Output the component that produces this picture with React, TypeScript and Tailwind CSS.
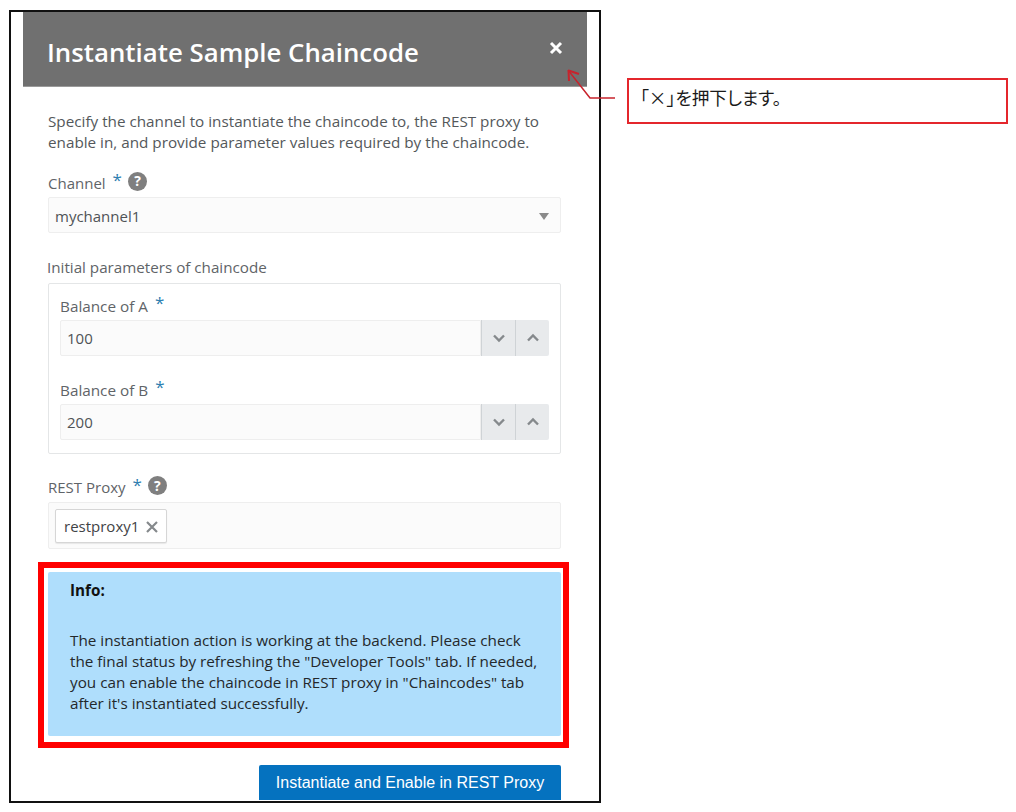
import React from 'react';

const Req = ({ className = '' }: { className?: string }) => (
  <span className={`text-[17px] leading-none text-[#2e7eb0] ${className}`}>*</span>
);

const Help = () => (
  <span className="flex h-[19px] w-[19px] items-center justify-center rounded-full bg-[#7f7f7f] text-[14px] font-bold leading-none text-white">?</span>
);

const Chevron = ({ up = false }: { up?: boolean }) => (
  <svg width="14" height="10" viewBox="0 0 14 10" fill="none" stroke="#85898c" strokeWidth="2.4">
    <path d={up ? 'M2 7.5 7 2.5l5 5' : 'M2 2.5 7 7.5l5-5'} />
  </svg>
);

const NumberField = ({ label, value }: { label: string; value: string }) => (
  <div>
    <div className="flex h-[26px] items-center pb-[2px] text-[15.3px] text-[#5f6468]">
      <span>{label}</span>
      <Req className="ml-[7px] mt-[-7px]" />
    </div>
    <div className="flex h-[36px]">
      <div className="flex flex-1 items-center rounded-l-[2px] border border-[#eeeeee] bg-[#fbfbfb] pl-[6px] pt-[1px] text-[15px] text-[#4f5356]">{value}</div>
      <div className="flex w-[34px] items-center justify-center border-l border-[#cfd3d6] bg-[#e8eaec]"><Chevron /></div>
      <div className="flex w-[34px] items-center justify-center rounded-r-[2px] border-l border-[#cfd3d6] bg-[#e8eaec]"><Chevron up /></div>
    </div>
  </div>
);

export default function App() {
  return (
    <div className="relative flex h-[812px] w-[1016px] items-start bg-white pl-[9px] pt-[10px] font-['Open_Sans',sans-serif]">
      {/* captured dialog */}
      <div className="h-[793px] w-[592px] shrink-0 overflow-hidden border-2 border-[#111111] pl-[12px]">
        <div className="w-[564px]">
          <div className="flex h-[75px] items-start justify-between border-b border-[#9a9a9a] bg-[#707070] pl-[24px] pr-[24px]">
            <h1 className="mt-[20px] text-[25.8px] font-semibold leading-[40px] text-white">Instantiate Sample Chaincode</h1>
            <svg className="mt-[29px]" width="14" height="14" viewBox="0 0 14 14" stroke="#ffffff" strokeWidth="3">
              <path d="M2 2l10 10M12 2 2 12" />
            </svg>
          </div>

          <div className="pl-[25px] pr-[26px]">
            <p className="mt-[24px] text-[15.25px] leading-[21px] text-[#54585b]">
              Specify the channel to instantiate the chaincode to, the REST proxy to enable in, and provide parameter values required by the chaincode.
            </p>

            <div className="mt-[18px] flex h-[26px] items-center pb-[2px] text-[15px] text-[#5f6468]">
              <span>Channel</span>
              <Req className="ml-[7px] mt-[-7px]" />
              <span className="ml-[6px] mt-[-4px]"><Help /></span>
            </div>
            <div className="flex h-[36px] items-center justify-between rounded-[2px] border border-[#eeeeee] bg-[#fbfbfb] pl-[6px] pr-[11px] pt-[2px] text-[15px] text-[#4f5356]">
              <span>mychannel1</span>
              <span className="h-0 w-0 border-x-[5px] border-t-[7px] border-x-transparent border-t-[#8a8a8a]" />
            </div>

            <div className="-ml-px mt-[24px] h-[26px] text-[15.2px] leading-[20px] text-[#5f6468]">Initial parameters of chaincode</div>
            <div className="h-[171px] rounded-[2px] border border-[#e4e6e7] px-[11px] pt-[10px]">
              <NumberField label="Balance of A" value="100" />
              <div className="h-[22px]" />
              <NumberField label="Balance of B" value="200" />
            </div>

            <div className="mt-[22px] flex h-[26px] items-center pb-[3px] text-[15px] text-[#5f6468]">
              <span>REST Proxy</span>
              <Req className="ml-[7px] mt-[-7px]" />
              <span className="ml-[6px] mt-[-4px]"><Help /></span>
            </div>
            <div className="flex h-[47px] items-center rounded-[2px] border border-[#eeeeee] bg-[#fbfbfb] pl-[6px]">
              <div className="flex h-[34px] w-[112px] items-center rounded-[2px] border border-[#d6d6d6] bg-white pl-[8px] pt-[2px] text-[15px] text-[#3f4346] shadow-[0_1px_1px_rgba(0,0,0,0.08)]">
                <span>restproxy1</span>
                <svg className="ml-[7px]" width="12" height="12" viewBox="0 0 12 12" stroke="#85898c" strokeWidth="2.2">
                  <path d="M1 1l10 10M11 1 1 11" />
                </svg>
              </div>
            </div>

            {/* highlight around the info message */}
            <div className="-ml-[10px] -mr-[8px] mt-[13px] h-[186px] border-[6px] border-[#ff0000] pb-[6px] pl-[4px] pr-[2px] pt-[4px]">
              <div className="h-full rounded-[2px] bg-[#afdefc] pl-[22px] pr-[20px] text-[15.25px] leading-[21px] text-[#24282b]">
                <div className="pt-[8px] font-bold text-[#111111]">Info:</div>
                <p className="mt-[29px]">
                  The instantiation action is working at the backend. Please check the final status by refreshing the "Developer Tools" tab. If needed, you can enable the chaincode in REST proxy in "Chaincodes" tab after it's instantiated successfully.
                </p>
              </div>
            </div>

            <div className="mt-[17px] flex justify-end">
              <button className="h-[35px] w-[302px] rounded-t-[2px] bg-[#0572bf] font-['Liberation_Sans',sans-serif] text-[16px] text-white">
                Instantiate and Enable in REST Proxy
              </button>
            </div>
          </div>
        </div>
      </div>

      {/* callout */}
      <div className="ml-[26px] mt-[68px] flex h-[46px] w-[381px] shrink-0 items-start border-2 border-[#e4262c] pl-[11px] pt-[5px] font-['Noto_Sans_CJK_JP',sans-serif] text-[17.7px] leading-[24px] text-[#1a1a1a] [font-feature-settings:'palt']">
        「×」を押下します。
      </div>

      {/* arrow from callout to the close icon */}
      <svg className="absolute left-[560px] top-[60px]" width="60" height="45" viewBox="0 0 60 45" fill="none" stroke="#c8232c" strokeWidth="1.5">
        <path d="M55 38H30L8 10" />
        <path d="M8.5 10.500 9 21M8.500 10.500 19 14" strokeWidth="2" />
      </svg>
    </div>
  );
}
